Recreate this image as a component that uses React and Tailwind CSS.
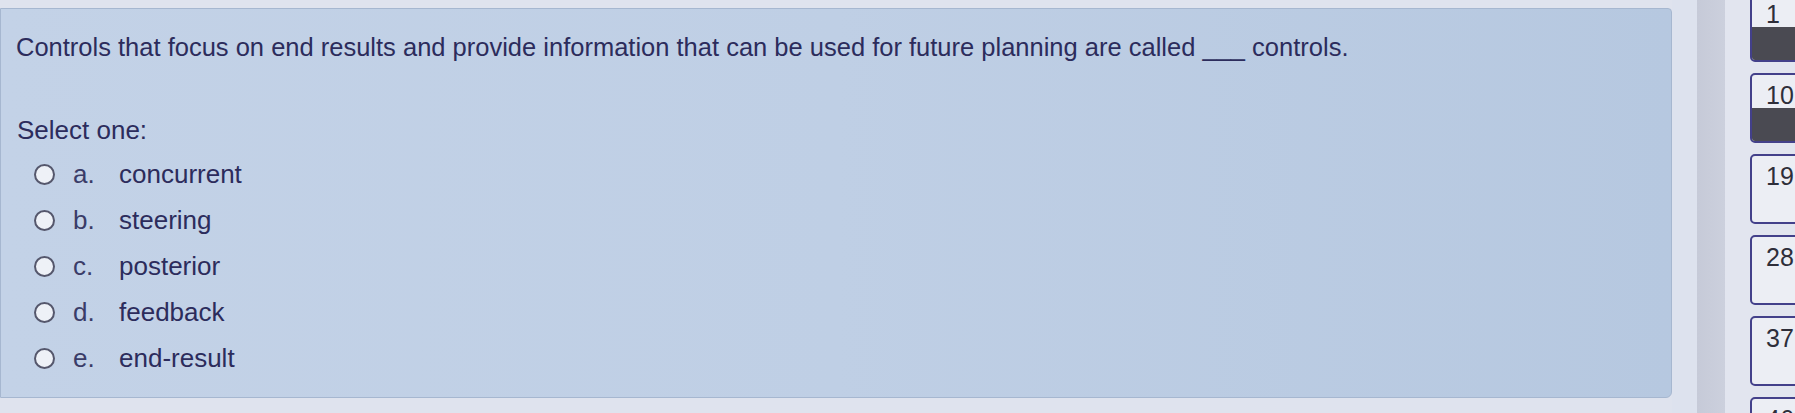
import React from "react";

const options = [
  { key: "a.", label: "concurrent" },
  { key: "b.", label: "steering" },
  { key: "c.", label: "posterior" },
  { key: "d.", label: "feedback" },
  { key: "e.", label: "end-result" },
];

const navItems = [
  { n: "1", done: true },
  { n: "10", done: true },
  { n: "19", done: false },
  { n: "28", done: false },
  { n: "37", done: false },
  { n: "46", done: false },
];

const App = () => {
  return (
    <div
      className="w-[1795px] h-[413px] bg-[#dfe3ee] flex overflow-hidden text-[#2c2c5c]"
      style={{ fontFamily: '"Liberation Sans", Arial, sans-serif' }}
    >
      {/* Question panel */}
      <div className="w-[1672px] shrink-0 pt-[8px] pb-[15px]">
        <div className="h-full bg-gradient-to-r from-[#c3d2e7] via-[#bfcfe5] to-[#b6c8e0] border border-[#a6b7d0] rounded-br-[6px] rounded-tr-[4px] pt-[23px] pl-[15px]">
          <p className="text-[25.5px] leading-[30px]">
            Controls that focus on end results and provide information that can be used for future planning are called ___ controls.
          </p>

          <p className="text-[26px] leading-[30px] mt-[53px] pl-[1px]">Select one:</p>

          <div className="mt-[6px] flex flex-col">
            {options.map((o) => (
              <div key={o.key} className="flex items-center h-[46px] text-[26px]">
                <span className="ml-[18px] w-[21px] h-[21px] rounded-full border-[2.5px] border-[#55576c] bg-[#eef1f7] shrink-0" />
                <span className="ml-[18px] w-[46px] text-[#3a3c68]">{o.key}</span>
                <span>{o.label}</span>
              </div>
            ))}
          </div>
        </div>
      </div>

      {/* Gap + shadow band */}
      <div className="w-[25px] shrink-0 bg-[#dde2ee]" />
      <div className="w-[28px] shrink-0 bg-gradient-to-r from-[#c6cad8] to-[#ccd0dd]" />

      {/* Quiz navigation */}
      <div className="flex-1 bg-[#e2e5ef] pl-[25px]">
        <div className="-mt-[8px] flex flex-col gap-[11px]">
          {navItems.map((item) => (
            <div
              key={item.n}
              className="w-[60px] h-[70px] shrink-0 border-2 border-[#43408a] rounded-[5px] bg-[#eceef4] overflow-hidden flex flex-col"
            >
              <div className="h-[33px] text-[25px] leading-[33px] pl-[14px] text-[#2e2e3a] pt-[4px]">
                {item.n}
              </div>
              {item.done && <div className="flex-1 bg-[#4a4a52]" />}
            </div>
          ))}
        </div>
      </div>
    </div>
  );
};

export default App;
